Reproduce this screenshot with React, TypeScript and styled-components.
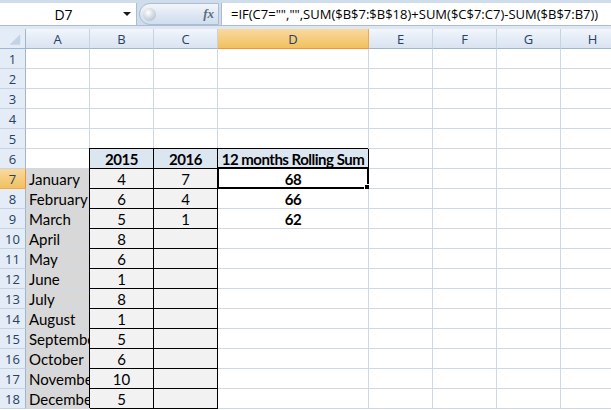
import * as React from 'react';
import styled, { createGlobalStyle, css } from 'styled-components';

const GlobalStyle = createGlobalStyle`
  html, body {
    margin: 0;
    padding: 0;
    background: #ffffff;
    overflow: hidden;
  }
  body {
    font-family: Lato, "Liberation Sans", sans-serif;
  }
`;

const COLS = ['A', 'B', 'C', 'D', 'E', 'F', 'G', 'H'];
const WIDTHS = [64, 64, 64, 151, 64, 64, 64, 64];

type CellData = {
    text?: string;
    fill?: string;
    boxed?: boolean;
    bold?: boolean;
    align?: 'left' | 'center';
    selected?: boolean;
};

const months = [
    ['January', '4', '7', '68'],
    ['February', '6', '4', '66'],
    ['March', '5', '1', '62'],
    ['April', '8', '', ''],
    ['May', '6', '', ''],
    ['June', '1', '', ''],
    ['July', '8', '', ''],
    ['August', '1', '', ''],
    ['September', '5', '', ''],
    ['October', '6', '', ''],
    ['November', '10', '', ''],
    ['December', '5', '', ''],
];

const buildRow = (r: number): CellData[] => {
    const row: CellData[] = COLS.map(() => ({}));
    if (r === 6) {
        row[1] = { text: '2015', fill: '#dce6f1', boxed: true, bold: true, align: 'center' };
        row[2] = { text: '2016', fill: '#dce6f1', boxed: true, bold: true, align: 'center' };
        row[3] = { text: '12 months Rolling Sum', fill: '#dce6f1', boxed: true, bold: true, align: 'center' };
    }
    if (r >= 7 && r <= 18) {
        const m = months[r - 7];
        row[0] = { text: m[0], fill: '#d8d8d8', align: 'left' };
        row[1] = { text: m[1], fill: '#f2f2f2', boxed: true, align: 'center' };
        row[2] = { text: m[2], fill: '#f2f2f2', boxed: true, align: 'center' };
        row[3] = { text: m[3], bold: true, align: 'center', selected: r === 7 };
    }
    return row;
};

const App = () => {
    const rows = Array.from({ length: 18 }, (_, i) => i + 1);
    return (
        <>
            <GlobalStyle />
            <Window>
                <FormulaBar>
                    <NameBox>
                        <NameText>D7</NameText>
                        <DropArrow />
                    </NameBox>
                    <FxPill>
                        <PillKnob />
                        <Fx>fx</Fx>
                    </FxPill>
                    <FormulaInput>=IF(C7="","",SUM($B$7:$B$18)+SUM($C$7:C7)-SUM($B$7:B7))</FormulaInput>
                </FormulaBar>
                <Gap />
                <Grid>
                    <Corner>
                        <svg width="26" height="20" viewBox="0 0 26 20">
                            <polygon points="21,5 21,16 10,16" fill="#c3d3e6" />
                        </svg>
                    </Corner>
                    {COLS.map(c => (
                        <ColHead key={c} $active={c === 'D'}>{c}</ColHead>
                    ))}
                    {rows.map(r => (
                        <React.Fragment key={r}>
                            <RowHead $active={r === 7}>{r}</RowHead>
                            {buildRow(r).map((cell, ci) => (
                                <Cell
                                    key={ci}
                                    $fill={cell.fill}
                                    $boxed={cell.boxed}
                                    $bold={cell.bold}
                                    $align={cell.align}
                                >
                                    {cell.text}
                                    {cell.selected && <Selection><Handle /></Selection>}
                                </Cell>
                            ))}
                        </React.Fragment>
                    ))}
                </Grid>
            </Window>
        </>
    );
};

export default App;

const Window = styled.div`
  width: 611px;
  height: 410px;
  overflow: hidden;
  background: #ffffff;
`;

const FormulaBar = styled.div`
  display: flex;
  height: 22px;
  padding-top: 3px;
  background: #cfdcec;
  border-bottom: 1px solid #a9bdd5;
`;

const NameBox = styled.div`
  width: 136px;
  display: flex;
  align-items: center;
  background: #ffffff;
  border-right: 1px solid #a9bdd5;
`;

const NameText = styled.span`
  flex: 1;
  text-align: center;
  font-family: "Open Sans", "Liberation Sans", sans-serif;
  font-size: 14px;
  color: #000;
  padding-left: 4px;
`;

const DropArrow = styled.span`
  width: 0;
  height: 0;
  margin-right: 5px;
  border-left: 4px solid transparent;
  border-right: 4px solid transparent;
  border-top: 4px solid #1a1a1a;
`;

const FxPill = styled.div`
  width: 80px;
  margin-left: 2px;
  display: flex;
  align-items: center;
  justify-content: space-between;
  background: linear-gradient(#f3f6fb, #dbe5f2 60%, #d2deee);
  border: 1px solid #a9bdd5;
  border-radius: 11px 0 0 11px;
  box-sizing: border-box;
  padding: 0 4px 0 3px;
`;

const PillKnob = styled.span`
  width: 13px;
  height: 13px;
  border-radius: 50%;
  background: radial-gradient(circle at 40% 35%, #ffffff, #c8d0da 60%, #a8b2be);
`;

const Fx = styled.span`
  font-family: "Liberation Serif", serif;
  font-style: italic;
  font-weight: bold;
  font-size: 13px;
  color: #5c6c80;
`;

const FormulaInput = styled.div`
  flex: 1;
  margin-left: 2px;
  background: #ffffff;
  border-left: 1px solid #a9bdd5;
  font-family: "Open Sans", "Liberation Sans", sans-serif;
  font-size: 13px;
  line-height: 22px;
  color: #000;
  padding-left: 9px;
  white-space: nowrap;
  overflow: hidden;
`;

const Gap = styled.div`
  height: 3px;
  background: #dfe7f2;
`;

const Grid = styled.div`
  display: grid;
  grid-template-columns: 26px ${WIDTHS.map(w => `${w}px`).join(' ')};
  grid-auto-rows: 20px;
  font-family: Lato, "Liberation Sans", sans-serif;
`;

const headerBase = css`
  box-sizing: border-box;
  display: flex;
  align-items: center;
  justify-content: center;
  font-family: "Open Sans", "Liberation Sans", sans-serif;
  font-size: 13px;
  color: #27415f;
  border-right: 1px solid #9eb6ce;
  border-bottom: 1px solid #9eb6ce;
`;

const Corner = styled.div`
  ${headerBase};
  background: #e4ecf7;
  overflow: hidden;
`;

const ColHead = styled.div<{ $active?: boolean }>`
  ${headerBase};
  background: ${p => p.$active
        ? 'linear-gradient(#f9d99f, #f1c15f)'
        : 'linear-gradient(#f3f6fb, #e4ecf7 50%, #dae4f0)'};
  border-right-color: ${p => p.$active ? '#f2a846' : '#c5d3e3'};
  border-bottom-color: ${p => p.$active ? '#f29436' : '#9eb6ce'};
`;

const RowHead = styled.div<{ $active?: boolean }>`
  ${headerBase};
  background: ${p => p.$active ? 'linear-gradient(#f9d99f, #f1c15f)' : '#e4ecf7'};
  border-bottom-color: ${p => p.$active ? '#f2a846' : '#c5d3e3'};
  border-right-color: ${p => p.$active ? '#f29436' : '#9eb6ce'};
`;

const Cell = styled.div<{ $fill?: string; $boxed?: boolean; $bold?: boolean; $align?: 'left' | 'center' }>`
  position: relative;
  box-sizing: border-box;
  display: flex;
  align-items: center;
  justify-content: ${p => p.$align === 'left' ? 'flex-start' : 'center'};
  padding-left: ${p => p.$align === 'left' ? '3px' : '0'};
  background: ${p => p.$fill || '#ffffff'};
  border-right: 1px solid ${p => p.$boxed ? '#000' : '#d0d7e5'};
  border-bottom: 1px solid ${p => p.$boxed ? '#000' : '#d0d7e5'};
  box-shadow: ${p => p.$boxed ? '-1px -1px 0 #000' : 'none'};
  font-size: 15px;
  font-weight: ${p => p.$bold ? 700 : 400};
  letter-spacing: ${p => p.$bold ? '-0.5px' : '0'};
  color: #000;
  white-space: nowrap;
`;

const Selection = styled.div`
  position: absolute;
  left: -1px;
  top: -2px;
  right: -1px;
  bottom: -1px;
  border: 2px solid #000;
  pointer-events: none;
`;

const Handle = styled.div`
  position: absolute;
  right: -4px;
  bottom: -4px;
  width: 5px;
  height: 5px;
  background: #000;
  border: 1px solid #fff;
`;
